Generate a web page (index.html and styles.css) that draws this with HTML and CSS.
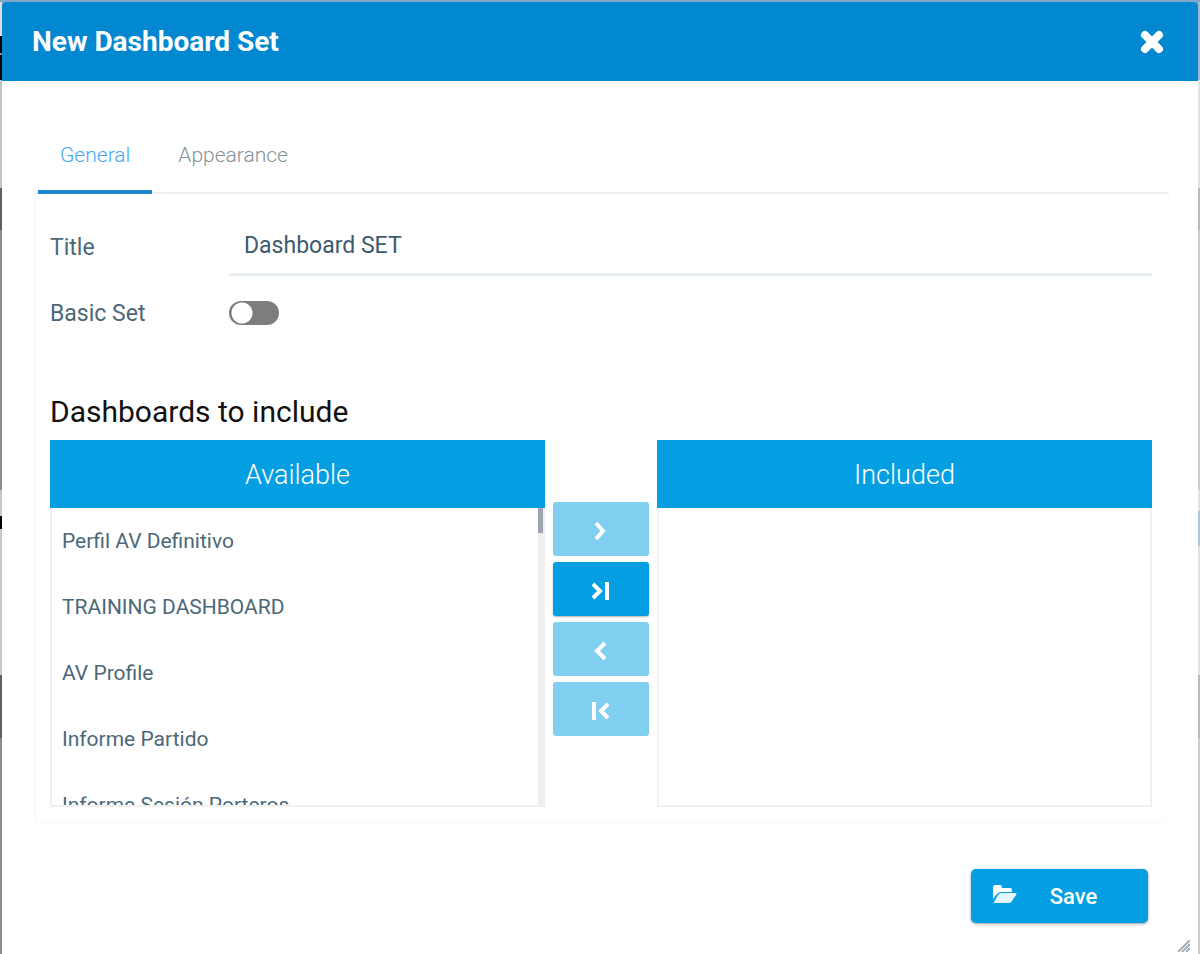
FILE: index.html
```html
<!DOCTYPE html>
<html lang="en">
<head>
  <meta charset="UTF-8" />
  <meta name="viewport" content="width=device-width, initial-scale=1.0" />
  <title>New Dashboard Set</title>
  <link rel="stylesheet" href="styles.css">
</head>
<body>
  <main class="dialog">
    <header class="dialog-header">
      <h1>New Dashboard Set</h1>
      <button type="button" class="close-btn" aria-label="Close">
        <svg viewBox="0 0 24 24" width="24" height="24"><path d="M5 5L19 19M19 5L5 19" stroke="#fff" stroke-width="8" stroke-linecap="round" /></svg>
      </button>
    </header>

    <div class="dialog-content">
      <nav class="tabs">
        <a href="#general" class="tab active">General</a>
        <a href="#appearance" class="tab">Appearance</a>
      </nav>

      <section class="panel" id="general">
        <div class="form-row">
          <label for="title">Title</label>
          <input type="text" id="title" class="text-input" value="Dashboard SET" />
        </div>
        <div class="form-row">
          <label for="basicSet">Basic Set</label>
          <input type="checkbox" id="basicSet" class="switch" />
        </div>

        <h2>Dashboards to include</h2>
        <div class="picklist">
          <div class="list-box">
            <h3>Available</h3>
            <div class="list-body">
              <ul>
                <li>Perfil AV Definitivo</li>
                <li>TRAINING DASHBOARD</li>
                <li>AV Profile</li>
                <li>Informe Partido</li>
                <li>Informe Sesión Porteros</li>
              </ul>
              <div class="scroll-track"><div class="scroll-thumb"></div></div>
            </div>
          </div>

          <div class="picklist-buttons">
            <button type="button" aria-label="Add" disabled>
              <svg viewBox="0 0 20 20" width="20" height="20"><path d="M5 2L12 10L5 18" /></svg>
            </button>
            <button type="button" aria-label="Add all">
              <svg viewBox="0 0 20 20" width="20" height="20"><path d="M2 3L9 10L2 17M16 1V19" /></svg>
            </button>
            <button type="button" aria-label="Remove" disabled>
              <svg viewBox="0 0 20 20" width="20" height="20"><path d="M14 2L6 10L14 18" /></svg>
            </button>
            <button type="button" aria-label="Remove all" disabled>
              <svg viewBox="0 0 20 20" width="20" height="20"><path d="M17 3L10 10L17 17M3 1V19" /></svg>
            </button>
          </div>

          <div class="list-box">
            <h3>Included</h3>
            <div class="list-body"></div>
          </div>
        </div>
      </section>

      <div class="dialog-footer">
        <button type="button" class="save-btn">
          <svg viewBox="0 0 24 20" width="24" height="20">
            <path d="M0 15V3Q0 1 2 1H7Q9 1 9 4H17Q19 4 19 6V8H8Q5 8 3 11Z" fill="#fff" />
            <path d="M1 18L5 11Q6 9 9 9H23Q24 9 23 11L19 17Q18 19 16 19H2Q0 19 1 18Z" fill="#e3f5fd" />
          </svg>
          <span>Save</span>
        </button>
      </div>
    </div>

    <svg class="resize-grip" viewBox="0 0 12 12" width="12" height="12"><path d="M0 12L12 0M4 12L12 4M8 12L12 8" stroke="#a5afb6" stroke-width="2" /></svg>
  </main>
</body>
</html>
```
FILE: styles.css
```css
* {
  box-sizing: border-box;
}
body {
  font-family: Roboto, "Liberation Sans", sans-serif;
  margin: 0;
  padding: 2px 2px 0;
  min-height: 100vh;
  display: flex;
  color: #4c6877;
  /* strips of the page behind the dialog */
  background-color: #999;
  background-image:
    linear-gradient(#7fa9c6, #7fa9c6),
    linear-gradient(#ddd 36px, #000 36px 53px, #888 53px 55px, #000 55px 80px, #c4c4c4 80px 188px, #655d62 188px 230px, #8d8d8d 230px 490px, #c8c8c8 490px 516px, #000 516px 529px, #c8c8c8 529px 675px, #655d62 675px 738px, #8d8d8d 738px),
    linear-gradient(#a3bacb 80px, #e2e2e2 80px 188px, #bbb 188px 230px, #ccc 230px 490px, #e2e2e2 490px 511px, #acc6df 511px 546px, #e2e2e2 546px 675px, #bbb 675px 738px, #ccc 738px);
  background-position: top, left, right;
  background-size: 100% 2px, 2px 100%, 2px 100%;
  background-repeat: no-repeat;
}
h1, h2, h3, ul {
  margin: 0;
  padding: 0;
}
button {
  border: 0;
  font-family: inherit;
  cursor: pointer;
}
.dialog {
  position: relative;
  flex: 1;
  background-color: #fff;
  border-radius: 4px 4px 0 0;
}
.dialog-header {
  display: flex;
  justify-content: space-between;
  align-items: center;
  height: 79px;
  padding: 0 34px 0 30px;
  background-color: #0288d1;
  border-radius: 4px 4px 0 0;
}
.dialog-header h1 {
  color: #fff;
  font-size: 28px;
  font-weight: 700;
}
.close-btn {
  display: flex;
  padding: 0;
  background: none;
}
.dialog-content {
  padding: 32px 29px 30px 32px;
}
.tabs {
  display: flex;
  padding-left: 4px;
}
.tab {
  padding: 30px 22px 23px;
  margin-right: 4px;
  border-bottom: 4px solid transparent;
  color: #84929a;
  font-size: 21px;
  font-weight: 300;
  line-height: 24px;
  text-decoration: none;
}
.tab.active {
  color: #46a8f5;
  border-bottom-color: #2186d0;
}
.panel {
  padding: 24px 15px 14px 14px;
  border: 2px solid #fafbfb;
  border-top-color: #eff2f3;
  margin-top: -2px;
}
.form-row {
  display: grid;
  grid-template-columns: 179px 1fr;
  align-items: center;
  min-height: 58px;
  margin-bottom: 8px;
  font-size: 23px;
}
.text-input {
  width: 100%;
  height: 58px;
  padding: 0 15px;
  border: 0;
  border-bottom: 3px solid #e7edf0;
  background: none;
  color: #3d5a6b;
  font: inherit;
}
.switch {
  appearance: none;
  width: 50px;
  height: 24px;
  margin: 0;
  border-radius: 12px;
  background: radial-gradient(circle at 13px 12px, #fff 10px, #7d7d7d 11px);
}
h2 {
  padding-top: 44px;
  color: #111;
  font-size: 30px;
  font-weight: 400;
  line-height: 36px;
}
.picklist {
  display: grid;
  grid-template-columns: 1fr 96px 1fr;
  gap: 8px;
  margin-top: 10px;
}
.list-box h3 {
  padding-top: 2px;
  background-color: #039fe2;
  color: #fff;
  font-size: 27px;
  font-weight: 300;
  line-height: 66px;
  text-align: center;
}
.list-body {
  display: flex;
  height: 299px;
  border: 2px solid #f0f0f0;
  border-top: 0;
  overflow: hidden;
}
.list-body ul {
  flex: 1;
  list-style: none;
}
.list-body li {
  padding: 20px 10px;
  font-size: 21px;
  line-height: 26px;
}
.scroll-track {
  width: 5px;
  background-color: #eee;
}
.scroll-thumb {
  height: 25px;
  background-color: #a0a5b3;
}
.picklist-buttons {
  display: flex;
  flex-direction: column;
  gap: 6px;
  padding-top: 62px;
}
.picklist-buttons button {
  display: flex;
  align-items: center;
  justify-content: center;
  height: 54px;
  padding-top: 4px;
  border-radius: 3px;
  background-color: #039fe2;
  box-shadow: 0 1px 2px rgba(0, 0, 0, 0.3);
}
.picklist-buttons button:disabled {
  background-color: #81cff0;
  box-shadow: none;
}
.picklist-buttons path {
  fill: none;
  stroke: #fff;
  stroke-width: 4;
}
.dialog-footer {
  display: flex;
  justify-content: flex-end;
  padding: 46px 21px 0;
}
.save-btn {
  display: flex;
  align-items: center;
  width: 177px;
  height: 54px;
  padding: 0 18px 0 22px;
  border-radius: 5px;
  background-color: #039fe2;
  box-shadow: 0 1px 3px rgba(0, 0, 0, 0.4);
  color: #fff;
  font-size: 22px;
  font-weight: 500;
}
.save-btn svg {
  margin-bottom: 5px;
}
.save-btn span {
  flex: 1;
  text-align: center;
}
.resize-grip {
  position: absolute;
  right: 8px;
  bottom: 2px;
}
```
